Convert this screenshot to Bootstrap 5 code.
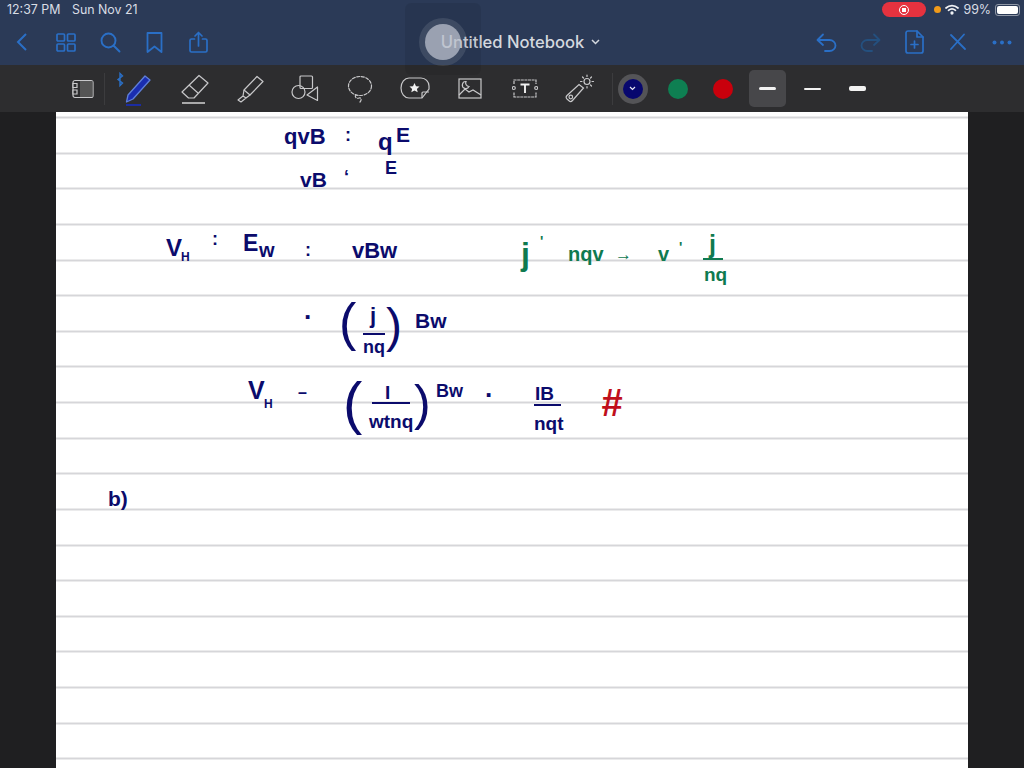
<!DOCTYPE html>
<html lang="en">
  <head>
    <meta charset="UTF-8" />
    <meta name="viewport" content="width=device-width, initial-scale=1.0" />
    <title>Untitled Notebook</title>
    <link href="https://cdn.jsdelivr.net/npm/bootstrap@5.3.0/dist/css/bootstrap.min.css" rel="stylesheet" />
    <style>
      html, body { height: 768px; overflow: hidden; background: #1f1f21; }
      body { font-family: "Inter", "Liberation Sans", sans-serif; }

      /* header */
      .app-head { background: #2b3a57; height: 65px; flex: none; }
      .status-row { height: 20px; padding: 0 4px 0 7px; color: #d9dde5; font-size: 12.4px; }
      .status-date { margin-left: 8px; }
      .rec-pill { width: 44px; height: 15px; background: #e5323f; border-radius: 8px; }
      .rec-dot { width: 10px; height: 10px; border-radius: 50%; border: 1px solid #fff; background: radial-gradient(#fff 40%, transparent 45%); }
      .mic-dot { width: 7px; height: 7px; background: #f09a1a; border-radius: 50%; margin-left: 4px; }
      .batt { width: 25px; height: 12px; border: 1px solid #8f97a6; border-radius: 3px; padding: 1px; }
      .batt-fill { background: #fff; border-radius: 2px; }
      .nav-row { height: 44px; }
      .nav-side { flex: 1 1 0; }
      .nav-btn { width: 44px; height: 44px; color: #2a6fc6; }
      .nav-btn.is-off { color: #24507f; }
      .note-title { color: #d4d8df; font-size: 16.6px; font-weight: 500; padding-left: 17px; }
      .note-title svg { margin-left: 7px; }

      /* toolbar */
      .tool-bar { background: #2d2d2f; height: 47px; flex: none; padding-left: 60px; color: #c8c8ca; }
      .tool-btn { width: 55px; height: 47px; }
      .tool-first { width: 44px; }
      .tool-pen { margin-left: 7px; }
      .tool-pen svg { margin-left: -8px; }
      .tool-sep { width: 1px; height: 32px; background: #3c3c3e; }
      .tool-sep-end { margin-left: 5px; }
      .swatch-btn { width: 45px; height: 47px; }
      .swatch-first { margin-left: -3px; }
      .swatch { width: 20px; height: 20px; border-radius: 50%; }
      .swatch-navy { background: #07076e; box-shadow: 0 0 0 5px #545457; }
      .swatch-green { background: #0e7f52; }
      .swatch-red { background: #c9000c; }
      .width-btn { width: 37px; height: 37px; border-radius: 5px; }
      .width-on { background: #47474a; }
      .width-slot { width: 45px; }
      .width-bar { width: 17px; background: #f2f2f2; border-radius: 2px; }
      .width-m { height: 3px; }
      .width-s { height: 2px; }
      .width-l { height: 5px; }
      .touch-shade { position: absolute; left: 405px; top: 3px; width: 76px; height: 72px; background: rgba(0, 0, 0, .07); border-radius: 6px; pointer-events: none; }
      .touch-spot { position: absolute; left: 419px; top: 18px; width: 48px; height: 48px; border-radius: 50%; background: rgba(200, 205, 215, .14); pointer-events: none; }
      .touch-spot::after { content: ""; position: absolute; inset: 6px; border-radius: 50%; background: rgba(190, 196, 208, .72); }

      /* page */
      .sheet-wrap { flex: 1 1 auto; padding: 0 56px; background: #1f1f21; }
      .sheet { height: 100%; position: relative; overflow: hidden; background-color: #fff;
        background-image: repeating-linear-gradient(to bottom, #d6d6d9 0, #d6d6d9 2px, #fff 2px, #fff 35.63px);
        background-position: 0 4.5px; }
      .ink { position: absolute; font-family: "Liberation Sans", sans-serif; font-weight: 700; line-height: 1; white-space: nowrap; color: #0b0b6c; }
      .ink-g { color: #0f7a50; }
      .ink-r { color: #c00f1c; font-style: italic; }
      .ink-thin { font-weight: 400; }
      .rule { position: absolute; height: 2px; background: #0b0b6c; }
      .rule-g { background: #0f7a50; }
    </style>
  </head>
  <body>
    <div class="d-flex flex-column vh-100 position-relative">
      <div class="app-head">
        <div class="status-row d-flex align-items-center justify-content-between">
          <div><span>12:37 PM</span> <span class="status-date">Sun Nov 21</span></div>
          <div class="d-flex align-items-center gap-1">
            <div class="rec-pill d-flex align-items-center justify-content-center"><div class="rec-dot"></div></div>
            <div class="mic-dot"></div>
            <svg width="14" height="11" viewBox="0 0 14 11" fill="none" stroke="#f0f2f5" stroke-width="1.7" stroke-linecap="round"><path d="M1 4C4.500.9 9.500.9 13 4"/><path d="M3.500 6.300c2-1.600 5-1.600 7 0"/><circle cx="7" cy="9" r=".8" fill="#f0f2f5"/></svg>
            <span>99%</span>
            <div class="batt d-flex"><div class="batt-fill flex-fill"></div></div>
          </div>
        </div>
        <div class="nav-row d-flex align-items-center">
          <div class="nav-side d-flex">
            <div class="nav-btn d-flex align-items-center justify-content-center">
              <svg width="14" height="20" viewBox="0 0 14 20" fill="none" stroke="currentColor" stroke-width="2"><path d="M11 2 3 10l8 8"/></svg>
            </div>
            <div class="nav-btn d-flex align-items-center justify-content-center">
              <svg width="20" height="19" viewBox="0 0 20 19" fill="none" stroke="currentColor" stroke-width="1.7"><rect x="1" y="1" width="7.500" height="7" rx="1"/><rect x="11.500" y="1" width="7.500" height="7" rx="1"/><rect x="1" y="11" width="7.500" height="7" rx="1"/><rect x="11.500" y="11" width="7.500" height="7" rx="1"/></svg>
            </div>
            <div class="nav-btn d-flex align-items-center justify-content-center">
              <svg width="21" height="21" viewBox="0 0 21 21" fill="none" stroke="currentColor" stroke-width="1.9"><circle cx="8.500" cy="8.500" r="7"/><path d="m13.500 13.500 6 6" stroke-linecap="round"/></svg>
            </div>
            <div class="nav-btn d-flex align-items-center justify-content-center">
              <svg width="17" height="21" viewBox="0 0 17 21" fill="none" stroke="currentColor" stroke-width="1.8" stroke-linejoin="round"><path d="M1.500 1h14v19l-7-5.500-7 5.500z"/></svg>
            </div>
            <div class="nav-btn d-flex align-items-center justify-content-center">
              <svg width="19" height="23" viewBox="0 0 19 23" fill="none" stroke="currentColor" stroke-width="1.7" stroke-linecap="round" stroke-linejoin="round"><path d="M5.500 8H2.500a1.500 1.500 0 0 0-1.500 1.500v10A1.500 1.500 0 0 0 2.500 21h14a1.500 1.500 0 0 0 1.500-1.500v-10A1.500 1.500 0 0 0 16.500 8h-3"/><path d="M9.500 15V1.500M6 5l3.500-3.500L13 5"/></svg>
            </div>
          </div>
          <div class="note-title d-flex align-items-center">Untitled Notebook<svg width="9" height="6" viewBox="0 0 9 6" fill="none" stroke="#d4d8df" stroke-width="1.500"><path d="m1 1 3.500 3.500L8 1"/></svg></div>
          <div class="nav-side d-flex justify-content-end">
            <div class="nav-btn d-flex align-items-center justify-content-center">
              <svg width="21" height="19" viewBox="0 0 21 19" fill="none" stroke="currentColor" stroke-width="1.800" stroke-linecap="round" stroke-linejoin="round"><path d="M7 1.500 1.500 7 7 12"/><path d="M2 7h11.500a6 5.500 0 0 1 0 11H9"/></svg>
            </div>
            <div class="nav-btn is-off d-flex align-items-center justify-content-center">
              <svg width="21" height="19" viewBox="0 0 21 19" fill="none" stroke="currentColor" stroke-width="1.800" stroke-linecap="round" stroke-linejoin="round"><path d="M14 1.500 19.500 7 14 12"/><path d="M19 7H7.500a6 5.500 0 0 0 0 11H12"/></svg>
            </div>
            <div class="nav-btn d-flex align-items-center justify-content-center">
              <svg width="19" height="24" viewBox="0 0 19 24" fill="none" stroke="currentColor" stroke-width="1.700" stroke-linejoin="round" stroke-linecap="round"><path d="M3 1h9l6 6v14a2 2 0 0 1-2 2H3a2 2 0 0 1-2-2V3a2 2 0 0 1 2-2z"/><path d="M12 1v6h6M9.500 11v7M6 14.500h7"/></svg>
            </div>
            <div class="nav-btn d-flex align-items-center justify-content-center">
              <svg width="18" height="18" viewBox="0 0 18 18" fill="none" stroke="currentColor" stroke-width="1.800" stroke-linecap="round"><path d="M2 16 15 1.500M2 2l14 14"/></svg>
            </div>
            <div class="nav-btn d-flex align-items-center justify-content-center">
              <svg width="20" height="5" viewBox="0 0 20 5" fill="currentColor"><circle cx="2.500" cy="2.500" r="2"/><circle cx="10" cy="2.500" r="2"/><circle cx="17.500" cy="2.500" r="2"/></svg>
            </div>
          </div>
        </div>
      </div>

      <div class="tool-bar d-flex align-items-center">
        <div class="tool-btn tool-first d-flex align-items-center justify-content-center">
          <svg width="24" height="20" viewBox="0 0 24 20" fill="none" stroke="currentColor" stroke-width="1.200"><rect x="3" y="1.500" width="20" height="17" rx="2"/><path d="M10 2h12.500v16H10z" fill="#555" stroke="none"/><path d="M3 4.500h4v4H3zM3 11h4v4H3z" fill="#2d2d2f"/></svg>
        </div>
        <div class="tool-sep"></div>
        <div class="tool-btn tool-pen d-flex align-items-center justify-content-center">
          <svg width="40" height="34" viewBox="0 0 40 34" fill="none"><path d="M4 8V1.500l2.500 2.500-4.500 3.500 4.500 3.500L4 13.500z" stroke="#2a6fc6" stroke-width="1.400"/><path d="M29 4 34 8 17 27l-6.500 3 1.500-7z" fill="#1a2db0" stroke="#5f7fd8" stroke-width="1.300" stroke-linejoin="round"/><path d="M10 33h15" stroke="#1a2db0" stroke-width="1.800"/></svg>
        </div>
        <div class="tool-btn d-flex align-items-center justify-content-center">
          <svg width="30" height="30" viewBox="0 0 30 30" fill="none" stroke="currentColor" stroke-width="1.200" stroke-linejoin="round"><path d="M19 1.500 28 9 14 24H8.500L2 18z"/><path d="M9 11l9 8"/><path d="M2 29h23" stroke-width="1.600"/></svg>
        </div>
        <div class="tool-btn d-flex align-items-center justify-content-center">
          <svg width="28" height="28" viewBox="0 0 28 28" fill="none" stroke="currentColor" stroke-width="1.200" stroke-linejoin="round"><path d="M21 1.500 27 6.500 14 20l-6-5z"/><path d="M8 15l-1 6 3 2 4-3M7 21l-5 4 3 2 5-4"/></svg>
        </div>
        <div class="tool-btn d-flex align-items-center justify-content-center">
          <svg width="28" height="28" viewBox="0 0 28 28" fill="none" stroke="currentColor" stroke-width="1.200" stroke-linejoin="round"><rect x="9" y="1" width="12.500" height="12.500" rx="1"/><circle cx="7.500" cy="17" r="6.500"/><path d="M26.500 12v13.500L16 20z"/></svg>
        </div>
        <div class="tool-btn d-flex align-items-center justify-content-center">
          <svg width="26" height="28" viewBox="0 0 26 28" fill="none" stroke="currentColor" stroke-width="1.200" stroke-dasharray="3 1.600" stroke-linecap="round"><ellipse cx="13" cy="11" rx="11.500" ry="9.500"/><path d="M9 20c-2 2 1 4 3 3s3 2 1 4"/></svg>
        </div>
        <div class="tool-btn d-flex align-items-center justify-content-center">
          <svg width="30" height="23" viewBox="0 0 30 23" fill="none" stroke="currentColor" stroke-width="1.200"><path d="M9 1h12a8 8 0 0 1 8 8v3l-7 9H9A8 10 0 0 1 9 1z"/><path d="M22 21v-5a1 1 0 0 1 1-1h6"/><path d="m14.500 6 1.500 3.200 3.500.4-2.600 2.300.8 3.400-3.200-1.800-3.200 1.800.8-3.400-2.600-2.300 3.500-.4z" fill="#f2f2f2" stroke="none"/></svg>
        </div>
        <div class="tool-btn d-flex align-items-center justify-content-center">
          <svg width="24" height="21" viewBox="0 0 24 21" fill="none" stroke="currentColor" stroke-width="1.200"><rect x="1" y="1" width="22" height="19"/><path d="m1 17 6-6 4 3 4-2 8 5"/><path d="M8 3.500a3.500 3.500 0 1 0 3 5 3.500 3.500 0 0 1-3-5z"/></svg>
        </div>
        <div class="tool-btn d-flex align-items-center justify-content-center">
          <svg width="26" height="21" viewBox="0 0 26 21" fill="none" stroke="currentColor" stroke-width="1.200"><path d="M2 6V2h22v4M2 14.500V19h22v-4.500" stroke-dasharray="3 .6"/><circle cx="1.800" cy="10" r="1.500"/><circle cx="24.200" cy="10" r="1.500"/><path d="M8.500 6.500h9M13 6.500V15" stroke="#f2f2f2" stroke-width="1.900"/></svg>
        </div>
        <div class="tool-btn d-flex align-items-center justify-content-center">
          <svg width="30" height="30" viewBox="0 0 30 30" fill="none" stroke="currentColor" stroke-width="1.200" stroke-linecap="round"><path d="M14 10.500l4.500 3.500-11 12.500a2.500 2.500 0 0 1-3.500.3l-2-1.800a2.500 2.500 0 0 1 0-3.500z"/><circle cx="5.800" cy="23" r="1.800"/><circle cx="22" cy="7.500" r="3"/><path d="M22 1v1.500M22 12.500V14M15.500 7.500H17M27 7.500h1.500M17.500 3l1 1M25.500 11l1 1M26.500 3l-1 1"/></svg>
        </div>
        <div class="tool-sep tool-sep-end"></div>
        <div class="swatch-btn swatch-first d-flex align-items-center justify-content-center">
          <div class="swatch swatch-navy d-flex align-items-center justify-content-center"><svg width="7" height="5" viewBox="0 0 7 5" fill="none" stroke="#e4e4f2" stroke-width="1.200"><path d="m1 1 2.500 2.500L6 1"/></svg></div>
        </div>
        <div class="swatch-btn d-flex align-items-center justify-content-center"><div class="swatch swatch-green"></div></div>
        <div class="swatch-btn d-flex align-items-center justify-content-center"><div class="swatch swatch-red"></div></div>
        <div class="width-slot d-flex justify-content-center"><div class="width-btn width-on d-flex align-items-center justify-content-center"><div class="width-bar width-m"></div></div></div>
        <div class="width-slot d-flex justify-content-center"><div class="width-btn d-flex align-items-center justify-content-center"><div class="width-bar width-s"></div></div></div>
        <div class="width-slot d-flex justify-content-center"><div class="width-btn d-flex align-items-center justify-content-center"><div class="width-bar width-l"></div></div></div>
      </div>

      <div class="sheet-wrap">
        <div class="sheet" id="sheet"></div>
      </div>

      <div class="touch-shade"></div>
      <div class="touch-spot"></div>
    </div>

    <script src="https://cdn.jsdelivr.net/npm/bootstrap@5.3.0/dist/js/bootstrap.bundle.min.js"></script>
    <script>
      // handwriting on the page: [text, left, top, size, extra class], in screen coordinates
      const inkItems = [
        ["qvB", 284, 126, 22], [":", 345, 126, 18], ["q", 378, 130, 24], ["E", 396, 124, 21],
        ["vB", 300, 169, 21], ["‘", 344, 168, 18], ["E", 385, 159, 18],
        ["V", 166, 236, 24], ["H", 181, 251, 12], [":", 212, 230, 18], ["E", 243, 232, 23], ["w", 259, 240, 20],
        [":", 305, 241, 18], ["vBw", 352, 240, 22],
        ["j", 521, 238, 32, "ink-g"], ["'", 540, 234, 14, "ink-g"], ["nqv", 568, 244, 20, "ink-g"], ["→", 615, 246, 17, "ink-g"],
        ["v", 658, 244, 20, "ink-g"], ["'", 679, 240, 14, "ink-g"], ["j", 709, 232, 25, "ink-g"], ["nq", 704, 265, 19, "ink-g"],
        ["·", 304, 304, 26], ["(", 339, 296, 52, "ink-thin"], ["j", 370, 305, 22], ["nq", 363, 338, 18], [")", 386, 302, 48, "ink-thin"], ["Bw", 415, 310, 21],
        ["V", 248, 378, 25], ["H", 264, 398, 12], ["–", 298, 385, 16], ["(", 343, 374, 58, "ink-thin"], ["I", 385, 383, 19],
        ["wtnq", 369, 412, 19], [")", 414, 378, 50, "ink-thin"], ["Bw", 436, 382, 18], ["·", 485, 382, 26],
        ["IB", 535, 384, 19], ["nqt", 534, 414, 19], ["#", 601, 384, 38, "ink-r"],
        ["b)", 108, 488, 21]
      ];
      // fraction bars: [left, top, width, extra class]
      const ruleItems = [
        [703, 258, 20, "rule-g"], [363, 333, 22, ""], [372, 402, 38, ""], [534, 404, 27, ""]
      ];
      const sheet = document.getElementById("sheet");
      const sheetLeft = 56;
      const sheetTop = 112;

      inkItems.forEach(([text, left, top, size, cls]) => {
        const span = document.createElement("span");
        span.className = "ink " + (cls || "");
        span.textContent = text;
        span.style.left = left - sheetLeft + "px";
        span.style.top = top - sheetTop + "px";
        span.style.fontSize = size + "px";
        sheet.appendChild(span);
      });

      ruleItems.forEach(([left, top, width, cls]) => {
        const bar = document.createElement("div");
        bar.className = "rule " + cls;
        bar.style.left = left - sheetLeft + "px";
        bar.style.top = top - sheetTop + "px";
        bar.style.width = width + "px";
        sheet.appendChild(bar);
      });
    </script>
  </body>
</html>
